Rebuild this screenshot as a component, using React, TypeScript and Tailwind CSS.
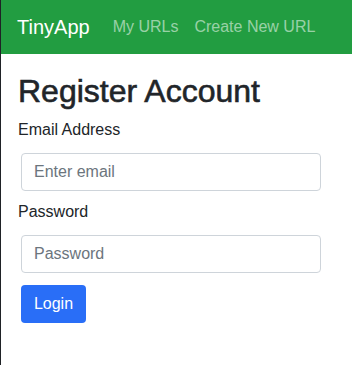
export default function App() {
  return (
    <div
      className="h-[365px] w-[352px] overflow-hidden border-l border-[#1f2226] bg-white text-[#212529]"
      style={{ fontFamily: '"Liberation Sans", Arial, sans-serif' }}
    >
      <nav className="flex h-[54px] items-center bg-[#229d41] pl-[16px]">
        <span className="mr-[15px] text-[20px] leading-[30px] text-white">TinyApp</span>
        <a className="px-[8px] text-[16px] leading-[24px] text-[rgba(255,255,255,0.55)]">My URLs</a>
        <a className="px-[8px] text-[16px] leading-[24px] text-[rgba(255,255,255,0.55)]">Create New URL</a>
      </nav>
      <main className="flex flex-col items-start pl-[17px] pt-[18px]">
        <h1 className="mb-[8px] text-[32px] leading-[38px] [-webkit-text-stroke:0.6px_#212529]">
          Register Account
        </h1>
        <label className="text-[16px] leading-[24px]">Email Address</label>
        <input
          type="email"
          placeholder="Enter email"
          className="mt-[11px] ml-[3px] h-[38px] w-[300px] rounded-[4px] border border-[#ced4da] px-[12px] text-[16px] text-[#212529] placeholder:text-[#6c757d] outline-none"
        />
        <label className="mt-[9px] text-[16px] leading-[24px]">Password</label>
        <input
          type="password"
          placeholder="Password"
          className="mt-[11px] ml-[3px] h-[38px] w-[300px] rounded-[4px] border border-[#ced4da] px-[12px] text-[16px] text-[#212529] placeholder:text-[#6c757d] outline-none"
        />
        <button className="mt-[12px] ml-[3px] h-[38px] w-[65px] rounded-[4px] bg-[#296ef7] text-[16px] text-white">
          Login
        </button>
      </main>
    </div>
  );
}
